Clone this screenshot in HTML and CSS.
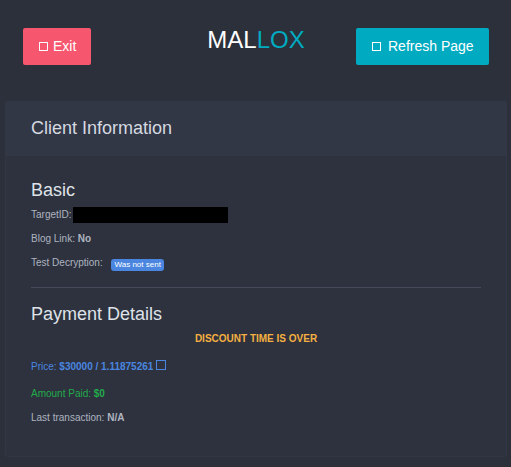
FILE: index.html
```html
<!DOCTYPE html>
<html lang="en">
<head>
  <meta charset="UTF-8" />
  <meta name="viewport" content="width=device-width, initial-scale=1.0"/>
  <link rel="stylesheet" href="styles.css">
</head>
<body>

  <header class="topbar">
    <div class="topbar-left">
      <a class="btn btn-exit"><span class="box"></span>Exit</a>
    </div>
    <div class="logo">MAL<span class="logo-accent">LOX</span></div>
    <div class="topbar-right">
      <a class="btn btn-refresh"><span class="box"></span>Refresh Page</a>
    </div>
  </header>

  <section class="card">
    <div class="card-header">Client Information</div>
    <div class="card-body">
      <h2 class="first">Basic</h2>
      <p class="row-target">TargetID:<span class="redacted"></span></p>
      <p class="row-blog">Blog Link: <b>No</b></p>
      <p class="row-test">Test Decryption: <span class="badge">Was not sent</span></p>

      <hr>

      <h2>Payment Details</h2>
      <div class="discount">DISCOUNT TIME IS OVER</div>
      <p class="price"><span>Price: <b>$30000 / 1.11875261</b></span><span class="box box-price"></span></p>
      <p class="paid">Amount Paid: <b>$0</b></p>
      <p class="last">Last transaction: <b>N/A</b></p>
    </div>
  </section>

</body>
</html>
```

FILE: styles.css
```css
* {
  margin: 0;
  padding: 0;
  box-sizing: border-box;
}

html, body {
  width: 100%;
  height: 100%;
  overflow: hidden;
  background: #2b303b;
  font-family: "Liberation Sans", Arial, sans-serif;
  color: #aeb4c0;
}

.topbar {
  display: grid;
  grid-template-columns: 1fr auto 1fr;
  align-items: start;
  padding: 28px 22px 0 23px;
  height: 101px;
}

.topbar-right {
  display: flex;
  justify-content: flex-end;
}

.btn {
  display: inline-flex;
  align-items: center;
  height: 37px;
  padding-bottom: 1px;
  border-radius: 2px;
  color: #fff;
  font-size: 14px;
}

.btn-exit {
  width: 68px;
  padding-left: 16px;
  background: #f7566f;
}

.btn-exit .box {
  margin-right: 5px;
}

.btn-refresh {
  width: 133px;
  padding-left: 16px;
  background: #00abc1;
}

.btn-refresh .box {
  margin-right: 7px;
}

.box {
  display: inline-block;
  width: 9px;
  height: 9px;
  border: 1px solid currentColor;
}

.logo {
  font-size: 24px;
  line-height: 24px;
  color: #fff;
}

.logo-accent {
  color: #00abc1;
}

.card {
  margin: 0 4px 0 5px;
  height: 356px;
  background: #2d323e;
  border: 1px solid #323745;
  border-radius: 3px;
}

.card-header {
  height: 55px;
  margin: -1px -1px 0;
  padding: 0 26px;
  display: flex;
  align-items: center;
  background: #323745;
  border-radius: 3px 3px 0 0;
  font-size: 18px;
  color: #d5d9e0;
}

.card-body {
  padding: 24px 25px 0;
}

h2 {
  font-size: 18px;
  font-weight: normal;
  line-height: 20px;
  color: #dfe2e8;
}

p {
  font-size: 10px;
  line-height: 12px;
}

.row-target {
  display: flex;
  align-items: center;
  gap: 1px;
  margin-top: 7px;
  height: 16px;
}

.redacted {
  width: 155px;
  height: 16px;
  background: #000;
}

.row-blog {
  margin-top: 10px;
}

.row-test {
  margin-top: 12px;
  height: 18px;
}

.badge {
  display: inline-block;
  margin-left: 6px;
  padding: 0 3px;
  height: 12px;
  line-height: 12px;
  vertical-align: -1px;
  background: #4a86e0;
  border-radius: 3px;
  color: #fff;
  font-size: 8px;
}

hr {
  border: 0;
  border-top: 1px solid #444a5a;
  margin: 12px 0 0;
}

hr + h2 {
  margin-top: 16px;
}

.discount {
  margin-top: 9px;
  text-align: center;
  font-size: 10px;
  line-height: 12px;
  font-weight: bold;
  color: #f5b041;
}

.price {
  display: flex;
  align-items: center;
  gap: 3px;
  height: 12px;
  margin-top: 16px;
  color: #4a86e0;
}

.box-price {
  width: 10px;
  height: 10px;
  margin-bottom: 4px;
  border-width: 1.5px;
}

.paid {
  margin-top: 15px;
  color: #22ab4b;
}

.last {
  margin-top: 12px;
}
```
